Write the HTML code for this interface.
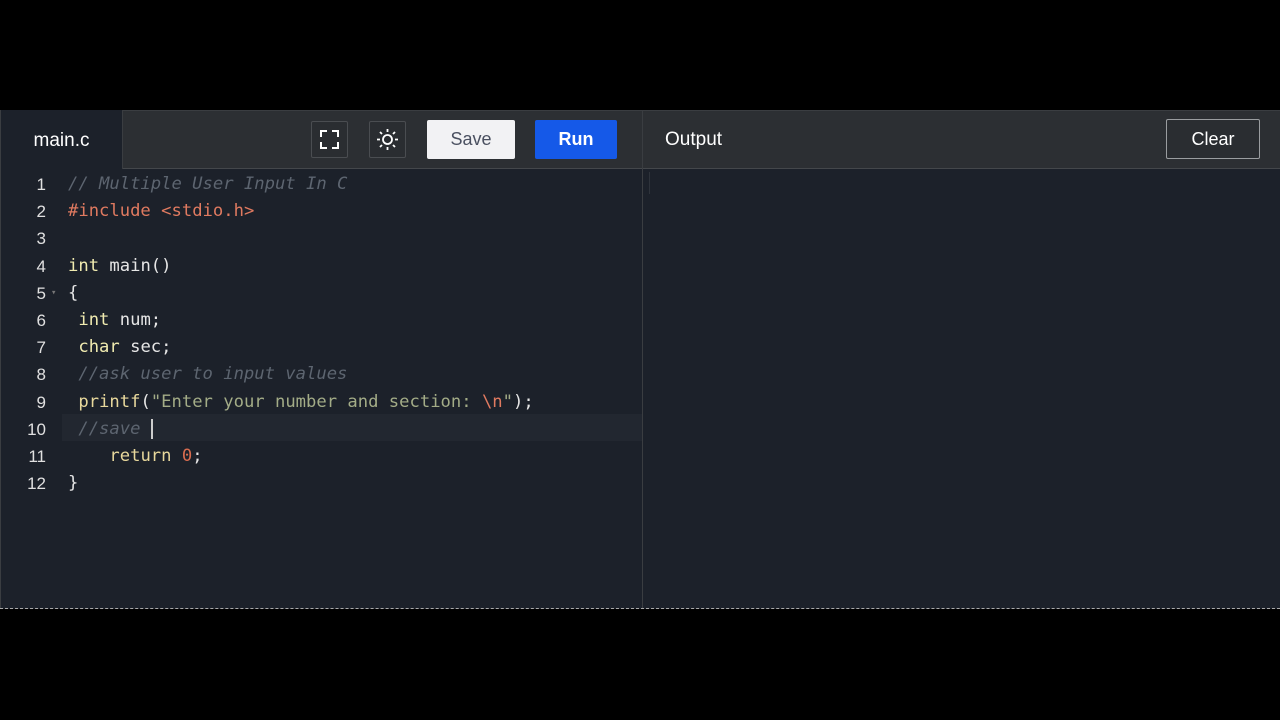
<!DOCTYPE html>
<html><head><style>
body{margin:0;width:1280px;height:720px;background:#000;position:relative;overflow:hidden;font-family:"Liberation Sans",sans-serif}
.hdr{position:absolute;left:0;top:110px;width:1280px;height:59px;background:#2c2f33;border-top:1px solid #3a3d41;box-sizing:border-box}
.tab{position:absolute;left:0;top:110px;width:123px;height:59px;background:#1c212a;border-left:1px solid #3a3d41;border-right:1px solid #3a3d41;box-sizing:border-box;color:#fff;font-size:19px;line-height:61px;text-align:center}
.sep{position:absolute;left:123px;top:168px;width:519px;height:1px;background:#44474b}
.sep2{position:absolute;left:642px;top:168px;width:638px;height:1px;background:#44474b}
.ed{position:absolute;left:0;top:169px;width:1280px;height:440px;background:#1c212a;border-left:1px solid #3a3d41;box-sizing:border-box}
.div{position:absolute;left:642px;top:110px;width:1px;height:499px;background:#3a3d41}
.div2{position:absolute;left:649px;top:172px;width:1px;height:22px;background:#2e333b}
.bot{position:absolute;left:0;top:608px;width:1280px;height:0;border-top:1px dashed #aaa}
.ib{position:absolute;top:121px;width:37px;height:37px;border:1px solid #4a4d51;border-radius:2px;box-sizing:border-box;background:#2a2d31}
.btn{position:absolute;top:120px;height:39px;border-radius:2px;font-size:18px;line-height:39px;text-align:center}
.code{position:absolute;top:171px;left:0;font-family:"DejaVu Sans Mono","Liberation Mono",monospace;font-size:17.2px;line-height:27.2px;color:#e6e6e6}
.ln{position:absolute;left:20px;width:26px;text-align:right;color:#e0e0e0;font-family:"Liberation Sans",sans-serif;font-size:17px}
.cl{position:absolute;left:68px;white-space:pre}
.c{color:#5d6570;font-style:italic}.k{color:#f0ebb0}.s{color:#a3ac87}.r{color:#e07a60}.o{color:#d86c4f}.e{color:#e8d89c}
.act{position:absolute;left:62px;top:414px;width:580px;height:27px;background:#222730}
</style></head><body>
<div class="hdr"></div>
<div class="ed"></div>
<div class="act"></div>
<div class="tab">main.c</div>
<div class="sep"></div><div class="sep2"></div>
<div class="div"></div><div class="div2"></div>
<div class="bot"></div>
<div class="ib" style="left:311px"><svg width="35" height="35" viewBox="0 0 35 35" fill="none" stroke="#fff" stroke-width="2"><path d="M9 15V9h6M20 9h6v6M26 20v6h-6M15 26H9v-6"/></svg></div>
<div class="ib" style="left:369px"><svg width="35" height="35" viewBox="0 0 35 35" fill="none" stroke="#fff" stroke-width="1.8"><circle cx="17.5" cy="17.5" r="4.5"/><path d="M17.5 7v3M17.5 25v3M7 17.5h3M25 17.5h3M10 10l2 2M23 23l2 2M25 10l-2 2M12 23l-2 2"/></svg></div>
<div class="btn" style="left:427px;width:88px;background:#f2f2f4;color:#4a5060">Save</div>
<div class="btn" style="left:535px;width:82px;background:#1559e8;color:#fff;font-weight:bold">Run</div>
<div style="position:absolute;left:665px;top:110px;line-height:60px;color:#fff;font-size:19px">Output</div>
<div class="btn" style="left:1166px;top:119px;width:94px;height:40px;border:1px solid #9a9da0;box-sizing:border-box;line-height:38px;color:#fff;background:#2a2d31">Clear</div>
<div class="code">
<div class="ln" style="top:0">1</div><div class="cl c" style="top:0">// Multiple User Input In C</div>
<div class="ln" style="top:27.2px">2</div><div class="cl" style="top:27.2px"><span class="r">#include</span> <span class="r">&lt;stdio.h&gt;</span></div>
<div class="ln" style="top:54.4px">3</div>
<div class="ln" style="top:81.6px">4</div><div class="cl" style="top:81.6px"><span class="k">int</span> main()</div>
<div class="ln" style="top:108.8px">5</div><div style="position:absolute;left:51px;top:108.8px;color:#777;font-size:9px">▾</div><div class="cl" style="top:108.8px">{</div>
<div class="ln" style="top:136px">6</div><div class="cl" style="top:136px"> <span class="k">int</span> num;</div>
<div class="ln" style="top:163.2px">7</div><div class="cl" style="top:163.2px"> <span class="k">char</span> sec;</div>
<div class="ln" style="top:190.4px">8</div><div class="cl c" style="top:190.4px"> //ask user to input values</div>
<div class="ln" style="top:217.6px">9</div><div class="cl" style="top:217.6px"> <span class="e">printf</span>(<span class="s">"Enter your number and section: </span><span class="r">\n</span><span class="s">"</span>);</div>
<div class="ln" style="top:244.8px">10</div><div class="cl" style="top:244.8px"><span class="c"> //save </span><span style="border-left:2px solid #ccc"></span></div>
<div class="ln" style="top:272px">11</div><div class="cl" style="top:272px">    <span class="e">return</span> <span class="o">0</span>;</div>
<div class="ln" style="top:299.2px">12</div><div class="cl" style="top:299.2px">}</div>
</div>
</body></html>
